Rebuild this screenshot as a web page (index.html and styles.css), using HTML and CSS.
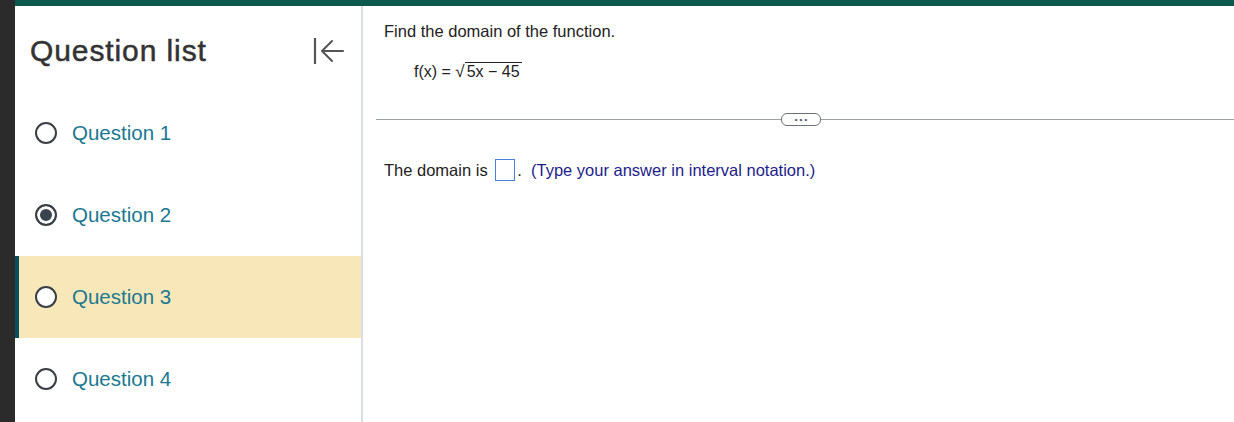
FILE: index.html
```html
<!DOCTYPE html>
<html lang="en">
<head>
    <meta charset="UTF-8">
    <meta name="viewport" content="width=device-width, initial-scale=1.0">
    <title>Question list</title>
    <link rel="stylesheet" href="styles.css">
</head>
<body>
    <div class="edge"></div>
    <div class="app">
        <div class="topbar"></div>
        <div class="layout">
            <aside class="sidebar">
                <div class="sidebar-head">
                    <h2>Question list</h2>
                    <svg class="collapse" width="32" height="28" viewBox="0 0 32 28">
                        <path d="M2 1 V27" stroke="#555" stroke-width="2.2" fill="none"/>
                        <path d="M30 14 H9 M19 4 L9 14 L19 24" stroke="#555" stroke-width="2" fill="none" stroke-linecap="round" stroke-linejoin="round"/>
                    </svg>
                </div>
                <ul class="qlist">
                    <li class="qitem"><span class="radio"></span><span class="qlabel">Question 1</span></li>
                    <li class="qitem"><span class="radio checked"></span><span class="qlabel">Question 2</span></li>
                    <li class="qitem current"><span class="radio"></span><span class="qlabel">Question 3</span></li>
                    <li class="qitem"><span class="radio"></span><span class="qlabel">Question 4</span></li>
                </ul>
            </aside>
            <main class="content">
                <p class="prompt">Find the domain of the function.</p>
                <p class="formula">f(x) = <span class="root">&radic;</span><span class="radicand">5x &minus; 45</span></p>
                <div class="divider">
                    <span class="more">&bull;&bull;&bull;</span>
                </div>
                <p class="answer">The domain is <span class="answer-box"></span>.  <span class="hint">(Type your answer in interval notation.)</span></p>
            </main>
        </div>
    </div>
</body>
</html>
```

FILE: styles.css
```css
/* Grundlayout */
body {
    margin: 0;
    height: 422px;
    display: flex;
    font-family: "Liberation Sans", Arial, sans-serif;
    background: #fff;
    color: #222;
    overflow: hidden;
}
.edge {
    width: 15px;
    background: #2b2b2b;
    flex-shrink: 0;
}
.app {
    flex: 1;
    display: flex;
    flex-direction: column;
}
.topbar {
    height: 6px;
    background: #0c5a4e;
}
.layout {
    flex: 1;
    display: flex;
}

/* Seitenleiste */
.sidebar {
    width: 346px;
    border-right: 2px solid #d9dde5;
    flex-shrink: 0;
}
.sidebar-head {
    display: flex;
    align-items: center;
    justify-content: space-between;
    padding: 30px 16px 0 15px;
    height: 30px;
}
.sidebar-head h2 {
    margin: 0;
    font-size: 30px;
    font-weight: normal;
    color: #333;
    letter-spacing: 0.9px;
    -webkit-text-stroke: 0.5px #333;
}
.collapse {
    display: block;
}
.qlist {
    list-style: none;
    margin: 26px 0 0;
    padding: 0;
}
.qitem {
    height: 82px;
    display: flex;
    align-items: center;
    padding-left: 20px;
    gap: 15px;
}
.qitem.current {
    background: #f8e8b9;
    box-shadow: inset 4px 0 0 #0b4d5c;
}
.radio {
    width: 18px;
    height: 18px;
    border: 2.5px solid #3a3f45;
    border-radius: 50%;
    box-sizing: content-box;
    background: #fff;
}
.radio.checked {
    background: #38434e;
    box-shadow: inset 0 0 0 3px #fff;
}
.qlabel {
    font-size: 20.5px;
    color: #1b7891;
}

/* Inhalt */
.content {
    flex: 1;
    padding: 14px 0 0 21px;
}
.prompt {
    margin: 0;
    font-size: 16.5px;
    line-height: 22px;
}
.formula {
    margin: 19px 0 0 30px;
    font-size: 16px;
    line-height: 22px;
}
.root {
    font-size: 17px;
}
.radicand {
    border-top: 1px solid #222;
    padding: 0 2px;
}
.divider {
    position: relative;
    margin: 36px 0 0 -8px;
    border-top: 1px solid #9aa0a6;
}
.more {
    position: absolute;
    left: 405px;
    top: -7px;
    width: 38px;
    height: 11px;
    border: 1px solid #6b7078;
    border-radius: 6px;
    background: #fff;
    font-size: 8px;
    line-height: 11px;
    text-align: center;
    letter-spacing: 2px;
    text-indent: 2px;
    color: #4a4f56;
}
.answer {
    margin: 39px 0 0;
    font-size: 16.5px;
    display: flex;
    align-items: center;
    white-space: pre;
}
.answer-box {
    display: inline-block;
    width: 18px;
    height: 20px;
    border: 1.5px solid #4a80db;
    margin: 0 2px 0 3px;
}
.hint {
    color: #1d1d8a;
}
```
